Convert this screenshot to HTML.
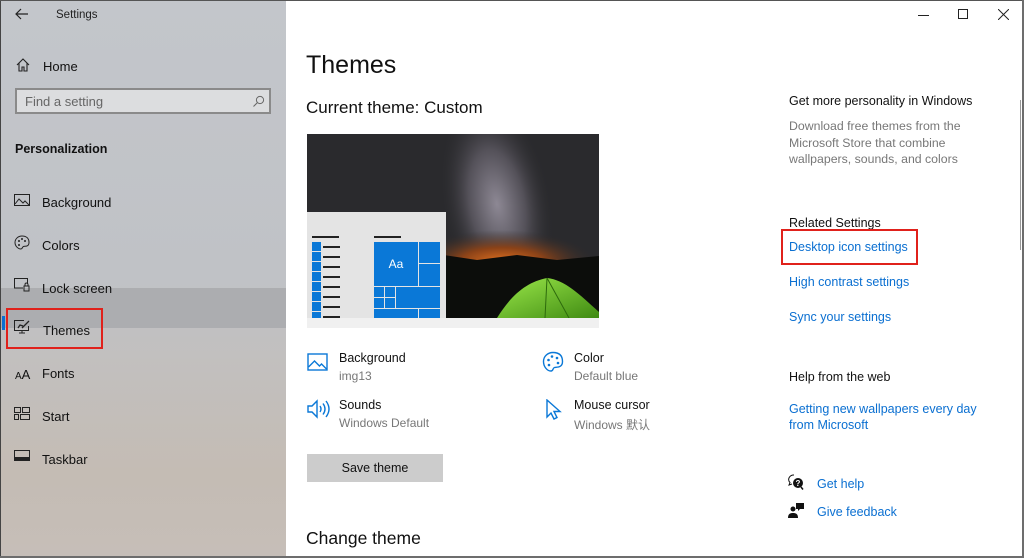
<!DOCTYPE html>
<html><head><meta charset="utf-8"><style>
*{margin:0;padding:0;box-sizing:border-box}
body{width:1024px;height:558px;overflow:hidden;background:#fff;font-family:"Liberation Sans","Noto Sans CJK SC",sans-serif;position:relative;color:#000}
.a{position:absolute;white-space:nowrap}
#side{position:absolute;left:0;top:0;width:286px;height:558px;background:linear-gradient(180deg,#c3c6cb 0%,#c0c2c6 50%,#c4bcb4 85%,#c6beb8 100%);border-left:1px solid #444}
.nav{font-size:13px;color:#111}
.ic{position:absolute}
.link{color:#0a6fd1;font-size:12.5px}
.gray{color:#777;font-size:12px}
.blk{color:#111;font-size:12.5px}
</style></head><body>
<div id="side"></div>
<div class="a" style="left:0;top:0;width:1024px;height:1px;background:#555"></div>
<svg class="ic" style="left:15px;top:8px" width="14" height="12" viewBox="0 0 14 12"><path d="M13 6H1M6 1L1 6l5 5" stroke="#222" stroke-width="1.2" fill="none"/></svg>
<div class="a" style="left:56px;top:9px;font-size:11.5px;color:#222">Settings</div>
<svg class="ic" style="left:16px;top:58px" width="14" height="14" viewBox="0 0 14 14"><path d="M1 7L7 1l6 6M3 5v8h3V9h2v4h3V5" stroke="#222" stroke-width="1.1" fill="none"/></svg>
<div class="a nav" style="left:43px;top:59px">Home</div>
<div class="a" style="left:15px;top:88px;width:256px;height:26px;border:2px solid #8a8a8a;background:#dcdddf"></div>
<div class="a" style="left:25px;top:94px;font-size:13px;color:#666">Find a setting</div>
<svg class="ic" style="left:252px;top:95px" width="13" height="13" viewBox="0 0 13 13"><circle cx="8" cy="5" r="3.6" stroke="#666" fill="none"/><path d="M5.5 7.5L1.5 11.5" stroke="#666"/></svg>
<div class="a" style="left:15px;top:142px;font-size:12.5px;font-weight:bold;color:#111">Personalization</div>
<div class="a" style="left:1px;top:288px;width:285px;height:40px;background:#acadb0"></div>
<div class="a" style="left:2px;top:316px;width:3px;height:14px;background:#0a6fd1"></div>
<div class="a" style="left:6px;top:308px;width:97px;height:41px;border:2px solid #e0211b"></div>
<svg class="ic" style="left:14px;top:194px" width="16" height="12" viewBox="0 0 16 12"><rect x=".5" y=".5" width="15" height="11" stroke="#222" fill="none"/><path d="M1 10l4-5 4 4 2-2 4 4" stroke="#222" fill="none"/></svg>
<div class="a nav" style="left:42px;top:195px">Background</div>
<svg class="ic" style="left:14px;top:235px" width="16" height="15" viewBox="0 0 16 15"><path d="M8 1C4 1 1 4 1 7.5S4 14 7 14c1.5 0 1-2 2.5-2.5S15 12 15 7.5 12 1 8 1z" stroke="#222" fill="none"/><circle cx="5" cy="6" r="1" fill="#222"/><circle cx="8" cy="4" r="1" fill="#222"/><circle cx="11" cy="6" r="1" fill="#222"/><circle cx="5" cy="10" r="1" fill="#222"/></svg>
<div class="a nav" style="left:42px;top:238px">Colors</div>
<svg class="ic" style="left:14px;top:278px" width="16" height="14" viewBox="0 0 16 14"><path d="M9 10H.5V.5h13V6" stroke="#222" fill="none"/><rect x="10" y="8" width="5" height="5" stroke="#222" fill="none"/><path d="M11 8V6.5a1.5 1.5 0 013 0V8" stroke="#222" fill="none"/></svg>
<div class="a nav" style="left:42px;top:281px">Lock screen</div>
<svg class="ic" style="left:14px;top:320px" width="16" height="14" viewBox="0 0 16 14"><path d="M10 .5H.5v10h14V6M5 13h6M8 10.5V13" stroke="#222" fill="none"/><path d="M15 1L8 8M4 8l2-3 3 1" stroke="#222" stroke-width="1.3" fill="none"/></svg>
<div class="a nav" style="left:43px;top:323px">Themes</div>
<div class="a" style="left:15px;top:367px;font-size:10px;color:#111">A<span style="font-size:13px">A</span></div>
<div class="a nav" style="left:42px;top:366px">Fonts</div>
<svg class="ic" style="left:14px;top:407px" width="16" height="13" viewBox="0 0 16 13"><rect x=".5" y=".5" width="6" height="5" stroke="#222" fill="none"/><rect x="8.5" y=".5" width="7" height="5" stroke="#222" fill="none"/><rect x=".5" y="7.5" width="4" height="5" stroke="#222" fill="none"/><rect x="6.5" y="7.5" width="9" height="5" stroke="#222" fill="none"/></svg>
<div class="a nav" style="left:42px;top:409px">Start</div>
<svg class="ic" style="left:14px;top:450px" width="16" height="11" viewBox="0 0 16 11"><rect x=".5" y=".5" width="15" height="10" stroke="#222" fill="none"/><rect x="1" y="7" width="14" height="3" fill="#222"/></svg>
<div class="a nav" style="left:42px;top:452px">Taskbar</div>

<div class="a" style="left:918px;top:15px;width:11px;height:1px;background:#222"></div>
<div class="a" style="left:958px;top:9px;width:10px;height:10px;border:1px solid #222"></div>
<svg class="ic" style="left:998px;top:9px" width="11" height="11" viewBox="0 0 11 11"><path d="M0 0l11 11M11 0L0 11" stroke="#222"/></svg>
<div class="a" style="left:1022px;top:0;width:2px;height:558px;background:#6d6d6d"></div>
<div class="a" style="left:0;top:556px;width:1024px;height:2px;background:#6d6d6d"></div>
<div class="a" style="left:1020px;top:100px;width:1px;height:150px;background:#999"></div>

<div class="a" style="left:306px;top:51px;font-size:25px;color:#111">Themes</div>
<div class="a" style="left:306px;top:98px;font-size:17px;color:#111">Current theme: Custom</div>

<div class="a" style="left:307px;top:134px;width:292px;height:184px;background:#2a2a2d;overflow:hidden">
<svg width="292" height="184" viewBox="0 0 292 184" style="position:absolute;left:0;top:0">
<defs>
<radialGradient id="mw" cx="0.5" cy="0.5" r="0.5"><stop offset="0" stop-color="#8d8894"/><stop offset="0.5" stop-color="#545159"/><stop offset="1" stop-color="#2a2a2d" stop-opacity="0"/></radialGradient>
<radialGradient id="gl" cx="0.5" cy="0.5" r="0.5"><stop offset="0" stop-color="#e0701f"/><stop offset="0.45" stop-color="#8a4218"/><stop offset="1" stop-color="#2a2a2d" stop-opacity="0"/></radialGradient>
<linearGradient id="tg" x1="0" y1="0" x2="1" y2="1"><stop offset="0" stop-color="#9be84a"/><stop offset="1" stop-color="#3f8a12"/></linearGradient>
</defs>
<ellipse cx="190" cy="70" rx="55" ry="110" fill="url(#mw)" transform="rotate(-10 190 70)"/>
<ellipse cx="195" cy="128" rx="95" ry="32" fill="url(#gl)"/>
<path d="M0 128 L40 124 L80 127 L130 120 L170 126 L210 121 L250 126 L292 122 V184 H0z" fill="#0c0d0b"/>
<path d="M190 184 C205 160 220 148 240 144 C258 146 272 160 292 178 V184z" fill="url(#tg)"/>
<path d="M240 144 L238 184 M240 144 L262 184" stroke="#2d6a0c" stroke-width="1"/>
</svg>
</div>
<div class="a" style="left:307px;top:318px;width:292px;height:10px;background:#f0f0f0"></div>
<div class="a" style="left:307px;top:212px;width:139px;height:106px;background:#e4e4e4;overflow:hidden">
<div style="position:absolute;left:5px;top:24px;width:27px;height:2px;background:#222"></div>
<div style="position:absolute;left:67px;top:24px;width:27px;height:2px;background:#222"></div>
<div style="position:absolute;left:5px;top:30px;width:9px;height:76px;background:repeating-linear-gradient(#0a78d7 0 9px,#e4e4e4 9px 10px)"></div>
<div style="position:absolute;left:16px;top:34px;width:17px;height:72px;background:repeating-linear-gradient(#222 0 2px,transparent 2px 10px)"></div>
<div style="position:absolute;left:67px;top:30px;width:44px;height:44px;background:#0a78d7;color:#fff;font-size:12px;text-align:center;line-height:44px">Aa</div>
<div style="position:absolute;left:112px;top:30px;width:21px;height:21px;background:#0a78d7"></div>
<div style="position:absolute;left:112px;top:52px;width:21px;height:22px;background:#0a78d7"></div>
<div style="position:absolute;left:67px;top:75px;width:10px;height:10px;background:#0a78d7"></div>
<div style="position:absolute;left:78px;top:75px;width:10px;height:10px;background:#0a78d7"></div>
<div style="position:absolute;left:89px;top:75px;width:44px;height:21px;background:#0a78d7"></div>
<div style="position:absolute;left:67px;top:86px;width:10px;height:10px;background:#0a78d7"></div>
<div style="position:absolute;left:78px;top:86px;width:10px;height:10px;background:#0a78d7"></div>
<div style="position:absolute;left:67px;top:97px;width:44px;height:10px;background:#0a78d7"></div>
<div style="position:absolute;left:112px;top:97px;width:21px;height:10px;background:#0a78d7"></div>
</div>

<svg class="ic" style="left:307px;top:353px" width="21" height="18" viewBox="0 0 21 18"><rect x="1" y="1" width="19" height="16" stroke="#0a78d7" stroke-width="1.4" fill="none"/><path d="M1.5 14l6-6 5 5 2-2 5 5" stroke="#0a78d7" stroke-width="1.4" fill="none"/></svg>
<div class="a blk" style="left:339px;top:351px">Background</div>
<div class="a gray" style="left:339px;top:369px">img13</div>
<svg class="ic" style="left:542px;top:351px" width="22" height="22" viewBox="0 0 22 22"><path d="M11 1.5C5.5 1.5 1.5 5.5 1.5 10.5S5 20 9 20c2.5 0 1.5-3 3.5-3.5S20.5 17 20.5 10.5 16.5 1.5 11 1.5z" stroke="#0a78d7" stroke-width="1.4" fill="none"/><circle cx="6.5" cy="9" r="1.3" fill="#0a78d7"/><circle cx="10" cy="5.5" r="1.3" fill="#0a78d7"/><circle cx="15" cy="7" r="1.3" fill="#0a78d7"/><circle cx="16" cy="12" r="1.3" fill="#0a78d7"/><circle cx="7" cy="14" r="1.3" fill="#0a78d7"/></svg>
<div class="a blk" style="left:574px;top:351px">Color</div>
<div class="a gray" style="left:574px;top:369px">Default blue</div>
<svg class="ic" style="left:307px;top:399px" width="23" height="20" viewBox="0 0 23 20"><path d="M1 7h4l5-5v16l-5-5H1z" stroke="#0a78d7" stroke-width="1.4" fill="none"/><path d="M13 7q2 3 0 6M16 4.5q4 5.5 0 11M19 2q6 8 0 16" stroke="#0a78d7" stroke-width="1.4" fill="none"/></svg>
<div class="a blk" style="left:339px;top:398px">Sounds</div>
<div class="a gray" style="left:339px;top:416px">Windows Default</div>
<svg class="ic" style="left:546px;top:399px" width="16" height="22" viewBox="0 0 16 22"><path d="M1 1v17l4-4 3 6 3-1.5-3-6h6z" stroke="#0a78d7" stroke-width="1.4" fill="none"/></svg>
<div class="a blk" style="left:574px;top:398px">Mouse cursor</div>
<div class="a gray" style="left:574px;top:416px">Windows 默认</div>

<div class="a" style="left:307px;top:454px;width:136px;height:28px;background:#cccccc;font-size:12.5px;text-align:center;line-height:28px;color:#111">Save theme</div>
<div class="a" style="left:306px;top:528px;font-size:17.5px;color:#111">Change theme</div>

<div class="a blk" style="left:789px;top:94px">Get more personality in Windows</div>
<div class="a gray" style="left:789px;top:118px;line-height:16.5px;font-size:12.3px">Download free themes from the<br>Microsoft Store that combine<br>wallpapers, sounds, and colors</div>
<div class="a blk" style="left:789px;top:216px">Related Settings</div>
<div class="a" style="left:781px;top:229px;width:137px;height:36px;border:2px solid #e0211b"></div>
<div class="a link" style="left:789px;top:240px">Desktop icon settings</div>
<div class="a link" style="left:789px;top:275px">High contrast settings</div>
<div class="a link" style="left:789px;top:310px">Sync your settings</div>
<div class="a blk" style="left:789px;top:370px">Help from the web</div>
<div class="a link" style="left:789px;top:401px;line-height:16px">Getting new wallpapers every day<br>from Microsoft</div>
<svg class="ic" style="left:788px;top:474px" width="16" height="16" viewBox="0 0 16 16"><path d="M6 1a5 4.5 0 00-4 7.5L1 11l3-1" stroke="#111" fill="none"/><circle cx="10" cy="9" r="5" fill="#111"/><text x="10" y="12" font-size="8" font-family="Liberation Sans" fill="#fff" text-anchor="middle" font-weight="bold">?</text><path d="M13 13l2 2.5" stroke="#111" stroke-width="1.5"/></svg>
<div class="a link" style="left:817px;top:477px">Get help</div>
<svg class="ic" style="left:788px;top:502px" width="16" height="16" viewBox="0 0 16 16"><circle cx="5" cy="7" r="2.5" fill="#111"/><path d="M0 16c0-4 2-5 5-5s5 1 5 5z" fill="#111"/><path d="M8 1h8v6h-4l-2 2V7H8z" fill="#111"/></svg>
<div class="a link" style="left:817px;top:505px">Give feedback</div>
</body></html>
